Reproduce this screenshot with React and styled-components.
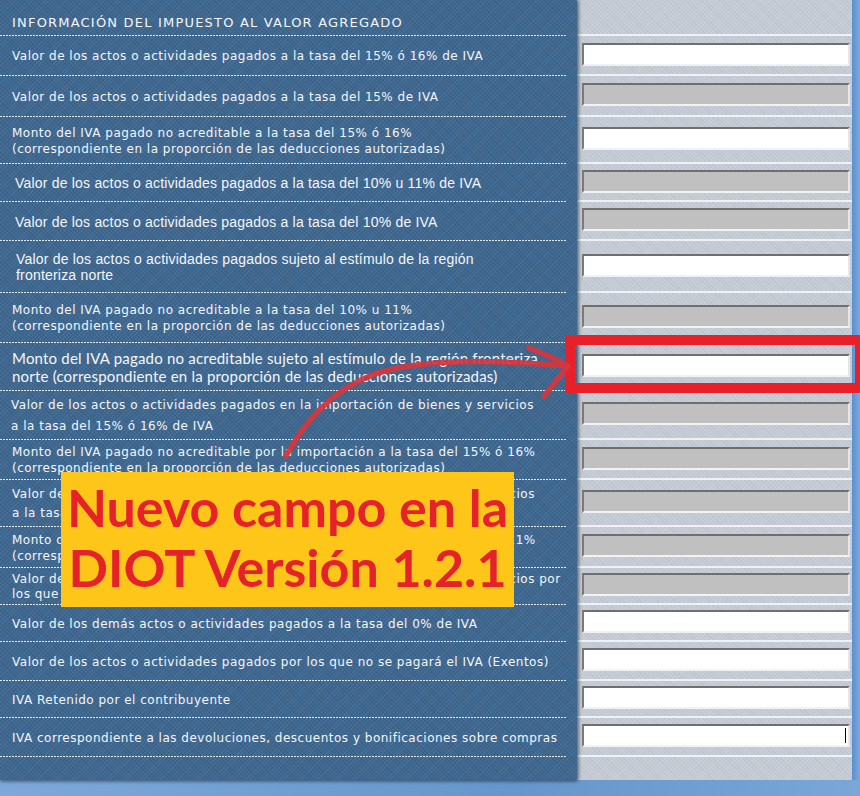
import React from 'react';
import styled, { createGlobalStyle } from 'styled-components';

const GlobalStyle = createGlobalStyle`
  html, body {
    margin: 0;
    padding: 0;
    background: #6c9dd4;
  }
  body {
    width: 860px;
    height: 796px;
    overflow: hidden;
  }
`;

const fonts = {
  tahoma: `font-family: "DejaVu Sans", sans-serif; font-size: 12px; letter-spacing: 0.5px;`,
  arial: `font-family: "Liberation Sans", Arial, sans-serif; font-size: 14px; letter-spacing: 0.2px;`,
  calibri: `font-family: Lato, "Liberation Sans", sans-serif; font-size: 15px; letter-spacing: 0.2px;`,
};

const Screen = styled.div`
  position: relative;
  width: 860px;
  height: 796px;
  display: grid;
  grid-template-columns: 852px 8px;
  grid-template-rows: 780px 16px;
  background: linear-gradient(180deg, #6f9fd6 0%, #5f91cc 100%);
`;

const Form = styled.div`
  display: flex;
  height: 780px;
`;

const LabelPanel = styled.div`
  width: 567px;
  padding-right: 10px;
  flex-shrink: 0;
  background-color: #3f6891;
  background-image:
    repeating-linear-gradient(45deg, rgba(0, 0, 0, 0.07) 0 1px, transparent 1px 3px),
    repeating-linear-gradient(-45deg, rgba(255, 255, 255, 0.05) 0 1px, transparent 1px 3px);
  box-shadow: 2px 0 3px rgba(20, 30, 45, 0.45), 0 2px 3px rgba(20, 30, 45, 0.35);
  position: relative;
  z-index: 1;
`;

const FieldPanel = styled.div`
  flex: 1;
  background-color: #c5ccd5;
  background-image:
    repeating-linear-gradient(45deg, rgba(0, 0, 0, 0.04) 0 1px, transparent 1px 3px),
    repeating-linear-gradient(-45deg, rgba(255, 255, 255, 0.08) 0 1px, transparent 1px 3px);
`;

const LabelRow = styled.div`
  box-sizing: border-box;
  height: ${(p) => p.$h}px;
  padding-left: ${(p) => p.$indent || 12}px;
  display: flex;
  flex-direction: column;
  justify-content: center;
  color: #f4f6f9;
  ${(p) => fonts[p.$font || 'tahoma']}
  line-height: ${(p) => p.$lh || 16}px;
  white-space: nowrap;
  background-image: ${(p) =>
    p.$rule === false
      ? 'none'
      : 'linear-gradient(to right, rgba(255,255,255,0.85) 2px, transparent 2px)'};
  background-size: 3px 1px;
  background-repeat: repeat-x;
  background-position: left bottom;
`;

const Title = styled(LabelRow)`
  font-size: 13px;
  letter-spacing: 1.2px;
  padding-top: 15px;
  justify-content: flex-start;
`;

const FieldRow = styled.div`
  box-sizing: border-box;
  height: ${(p) => p.$h}px;
  display: flex;
  align-items: center;
  padding-bottom: 2px;
  border-bottom: ${(p) => (p.$rule === false ? 'none' : '2px solid #eef1f5')};
`;

const Input = styled.div`
  box-sizing: border-box;
  width: 268px;
  height: 23px;
  margin-left: 5px;
  background: ${(p) => (p.$locked ? '#c0c0c0' : '#ffffff')};
  border-top: 2px solid #6f6f6f;
  border-left: 2px solid #7a7a7a;
  border-bottom: 2px solid #f2f2f2;
  border-right: 2px solid #e6e6e6;
`;

const Caret = styled.span`
  float: right;
  width: 1px;
  height: 15px;
  margin: 2px 2px 0 0;
  background: #000;
`;

const SideStrip = styled.div`
  background: linear-gradient(90deg, #5b8fcf 0%, #7aa9de 100%);
`;

const BottomStrip = styled.div`
  grid-column: 1 / span 2;
  background-color: #6b9cd4;
  background-image: linear-gradient(90deg, rgba(255, 255, 255, 0.12), rgba(0, 0, 0, 0.04) 60%, rgba(255, 255, 255, 0.1));
`;

const Highlight = styled.div`
  position: absolute;
  z-index: 2;
  left: 565px;
  top: 335px;
  width: 300px;
  height: 58px;
  box-sizing: border-box;
  border: 10px solid #e8202a;
`;

const Callout = styled.div`
  position: absolute;
  z-index: 3;
  left: 61px;
  top: 472px;
  width: 453px;
  height: 135px;
  box-sizing: border-box;
  padding-top: 5px;
  background: #ffc61a;
  color: #e5222a;
  font-family: Lato, "Open Sans", sans-serif;
  font-weight: 700;
  font-size: 52px;
  line-height: 60px;
  text-align: center;
  white-space: nowrap;
`;

const Arrow = styled.svg`
  position: absolute;
  z-index: 2;
  left: 0;
  top: 0;
  pointer-events: none;
`;

const rows = [
  { h: 40, lines: ['Valor de los actos o actividades pagados a la tasa del 15% ó 16% de IVA'] },
  { h: 41, lines: ['Valor de los actos o actividades pagados a la tasa del 15% de IVA'], locked: true },
  {
    h: 47,
    lines: [
      'Monto del IVA pagado no acreditable a la tasa del 15% ó 16%',
      '(correspondiente en la proporción de las deducciones autorizadas)',
    ],
  },
  {
    h: 38,
    font: 'arial',
    indent: 15,
    lines: ['Valor de los actos o actividades pagados a la tasa del 10% u 11% de IVA'],
    locked: true,
  },
  {
    h: 39,
    font: 'arial',
    indent: 15,
    lines: ['Valor de los actos o actividades pagados a la tasa del 10% de IVA'],
    locked: true,
  },
  {
    h: 52,
    font: 'arial',
    indent: 16,
    lines: ['Valor de los actos o actividades pagados sujeto al estímulo de la región', 'fronteriza norte'],
  },
  {
    h: 50,
    lines: [
      'Monto del IVA pagado no acreditable a la tasa del 10% u 11%',
      '(correspondiente en la proporción de las deducciones autorizadas)',
    ],
    locked: true,
  },
  {
    h: 48,
    font: 'calibri',
    lh: 18,
    lines: [
      'Monto del IVA pagado no acreditable sujeto al estímulo de la región fronteriza',
      'norte (correspondiente en la proporción de las deducciones autorizadas)',
    ],
  },
  {
    h: 49,
    indent: 11,
    lh: 21,
    lines: ['Valor de los actos o actividades pagados en la importación de bienes y servicios', ' a la tasa del 15% ó 16% de IVA'],
    locked: true,
  },
  {
    h: 40,
    lines: [
      'Monto del IVA pagado no acreditable por la importación  a la tasa del 15% ó 16%',
      '(correspondiente en la proporción de las deducciones autorizadas)',
    ],
    locked: true,
  },
  {
    h: 47,
    lh: 19,
    lines: ['Valor de los actos o actividades pagados en la importación de bienes y servicios', ' a la tasa del 10% u 11% de IVA'],
    locked: true,
  },
  {
    h: 41,
    lines: [
      'Monto del IVA pagado no acreditable por la importación a la tasa del 10% u 11%',
      '(correspondiente en la proporción de las deducciones autorizadas)',
    ],
    locked: true,
  },
  {
    h: 37,
    lh: 15,
    lines: [
      'Valor de los actos o actividades pagados en la importación de bienes y servicios por',
      'los que no se pagará el IVA (Exentos)',
    ],
    locked: true,
  },
  { h: 37, lines: ['Valor de los demás actos o actividades pagados a la tasa del 0% de IVA'] },
  { h: 39, lines: ['Valor de los actos o actividades pagados por los que no se pagará el IVA (Exentos)'] },
  { h: 37, lines: ['IVA Retenido por el contribuyente'] },
  {
    h: 39,
    lines: ['IVA correspondiente a las devoluciones, descuentos y bonificaciones sobre compras'],
    caret: true,
  },
];

function App() {
  return (
    <>
      <GlobalStyle />
      <Screen>
        <Form>
          <LabelPanel>
            <Title $h={36}>INFORMACIÓN DEL IMPUESTO AL VALOR AGREGADO</Title>
            {rows.map((row, i) => (
              <LabelRow key={i} $h={row.h} $font={row.font} $indent={row.indent} $lh={row.lh}>
                {row.lines.map((line, j) => (
                  <span key={j}>{line}</span>
                ))}
              </LabelRow>
            ))}
            <LabelRow $h={23} $rule={false} />
          </LabelPanel>
          <FieldPanel>
            <FieldRow $h={36} />
            {rows.map((row, i) => (
              <FieldRow key={i} $h={row.h}>
                <Input $locked={row.locked}>{row.caret && <Caret />}</Input>
              </FieldRow>
            ))}
            <FieldRow $h={23} $rule={false} />
          </FieldPanel>
        </Form>
        <SideStrip />
        <BottomStrip />

        <Highlight />
        <Arrow width="860" height="796" viewBox="0 0 860 796">
          <g fill="none" stroke="#d8353d" strokeWidth="5.5" strokeLinecap="round" strokeLinejoin="round" opacity="0.92">
            <path d="M286 456 C306 420 330 392 372 375 C420 358 500 360 566 366" />
            <path d="M529 348 C545 354 558 360 568 366" />
            <path d="M568 366 C560 376 552 386 544 396" />
          </g>
        </Arrow>
        <Callout>
          Nuevo campo en la
          <br />
          DIOT Versión 1.2.1
        </Callout>
      </Screen>
    </>
  );
}

export default App;
